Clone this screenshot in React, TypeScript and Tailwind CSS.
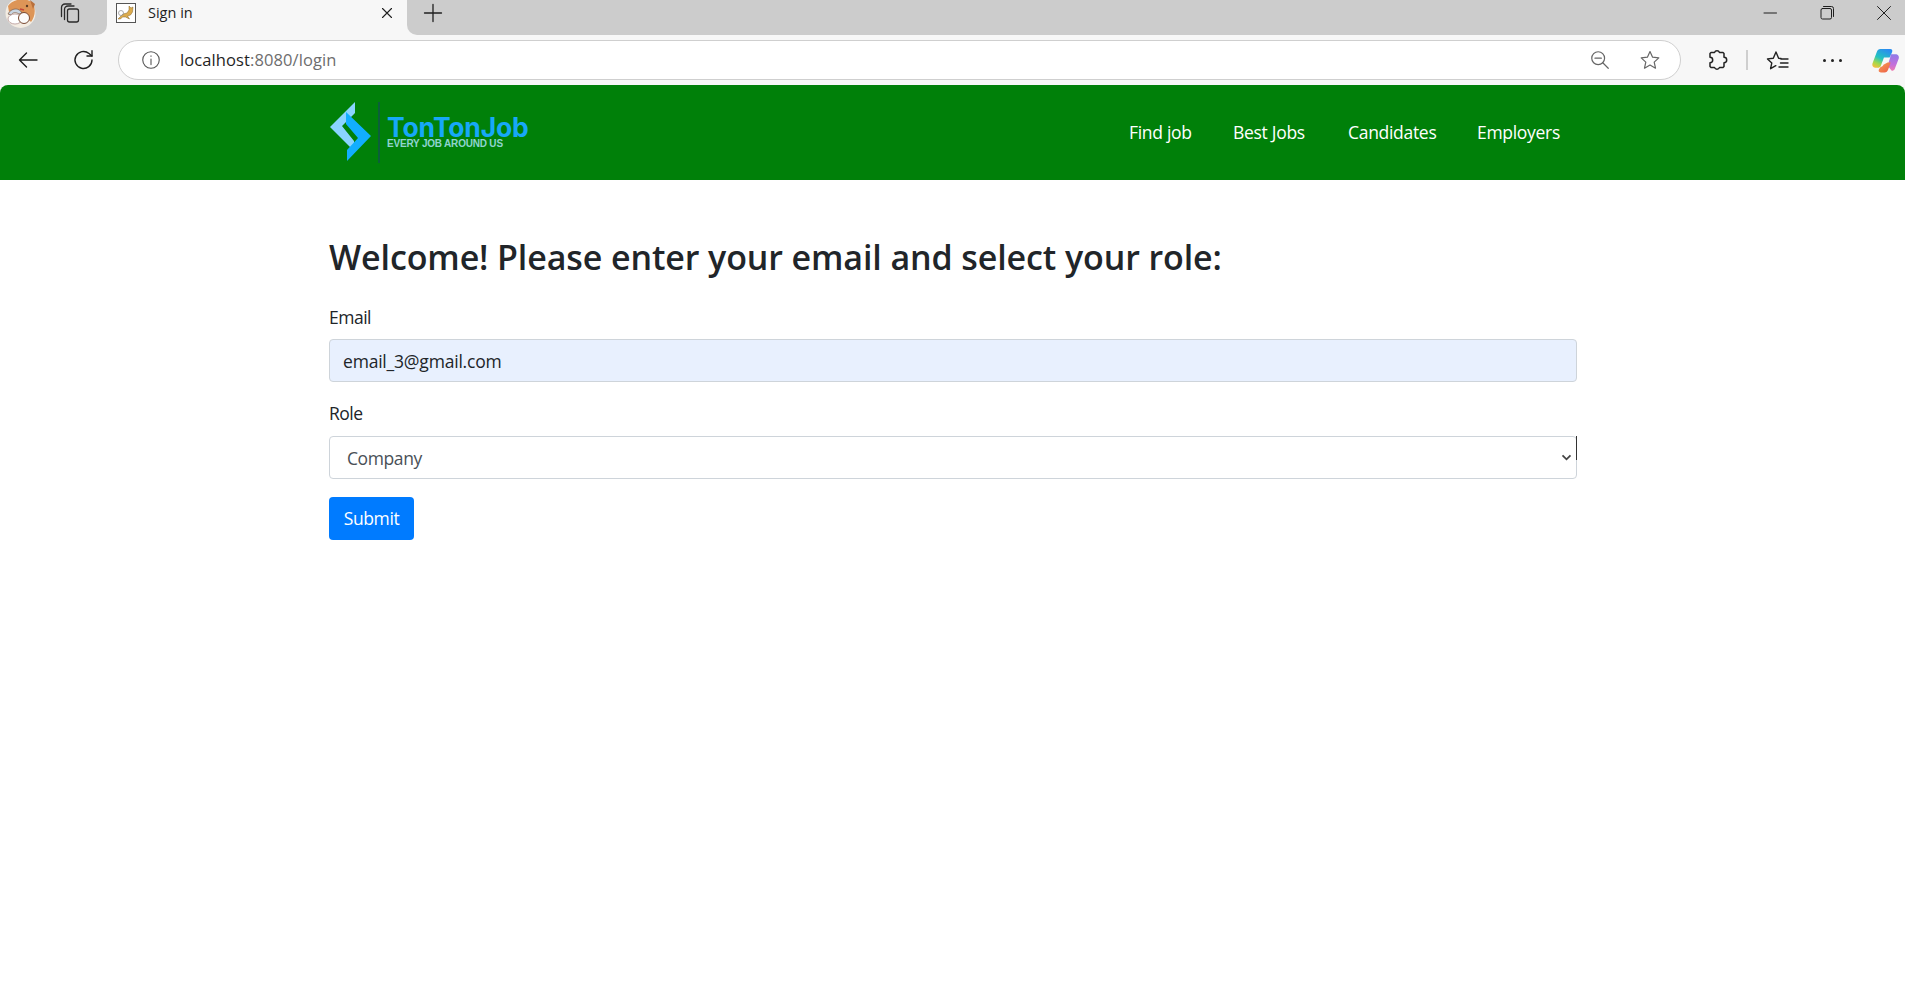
import React from "react";

const Stroke = ({ children, size = 24, vb = 24, w = 1.4, color = "#1f1f1f" }: { children: React.ReactNode; size?: number; vb?: number; w?: number; color?: string }) => (
  <svg width={size} height={size} viewBox={`0 0 ${vb} ${vb}`} fill="none" stroke={color} strokeWidth={w} strokeLinecap="round" strokeLinejoin="round">
    {children}
  </svg>
);

const Avatar = () => (
  <svg width="32" height="29" viewBox="0 0 32 29">
    <circle cx="15.500" cy="13" r="15" fill="#f3ece2" />
    <path d="M3 6C8-2 24-3 28 4c3 5 2 13-2 18l-6-6-8-7-8 3z" fill="#dd9557" />
    <path d="M25 0l5 4-2 5z" fill="#b9703c" />
    <path d="M3 14c3-6 11-7 14-1l-3 1c-3-2-6-2-8 1z" fill="#c9d6e2" stroke="#7a5a48" strokeWidth="0.7" />
    <ellipse cx="10" cy="19" rx="7" ry="5" fill="#fff" stroke="#a88" strokeWidth="0.7" />
    <circle cx="19" cy="18" r="5.500" fill="#fbfbfb" stroke="#7a4a32" strokeWidth="1" />
    <circle cx="22" cy="6" r="1.200" fill="#5a3a22" />
    <path d="M15 9l4 1" stroke="#c4453a" strokeWidth="1.400" />
  </svg>
);

const Favicon = () => (
  <svg width="20" height="20" viewBox="0 0 20 20">
    <rect x="0.500" y="0.500" width="19" height="19" fill="#fff" stroke="#555" />
    <path d="M2 16 7 11l4-1 2-3 0-4 2 2 2-1-.5 5-2 3-3 1 2 3-4-2-3 0-2 2z" fill="#dcab4c" stroke="#86662a" strokeWidth="0.500" />
    <circle cx="5" cy="10" r="2.500" fill="none" stroke="#999" strokeWidth="0.800" />
  </svg>
);

const Copilot = () => (
  <svg width="29" height="29" viewBox="0 0 28 28">
    <defs>
      <linearGradient id="cpa" x1="0.700" y1="0" x2="0.200" y2="1">
        <stop offset="0" stopColor="#2a8cf0" />
        <stop offset="0.5" stopColor="#22c3c0" />
        <stop offset="0.8" stopColor="#a6d84a" />
        <stop offset="1" stopColor="#f0c040" />
      </linearGradient>
      <linearGradient id="cpb" x1="0.500" y1="0" x2="0.500" y2="1">
        <stop offset="0" stopColor="#8f7be8" />
        <stop offset="0.6" stopColor="#c26fdc" />
        <stop offset="1" stopColor="#f07ab0" />
      </linearGradient>
      <linearGradient id="cpc" x1="0" y1="0" x2="1" y2="1">
        <stop offset="0" stopColor="#f8a050" />
        <stop offset="1" stopColor="#ec5a4a" />
      </linearGradient>
    </defs>
    <path d="M9 3h9.500c2 0 2.500 1.500 1.800 3L18 11h-5.500L9.500 19c-.6 1.400-1.500 2-3 2H4C1.800 21 .8 19 1.400 17L5.500 6C6.200 4 7.500 3 9 3z" fill="url(#cpa)" />
    <path d="M19 8h4.500c2.500 0 4 2 3.300 4L23 22c-.5 1.500-1.500 2-3 2l-4-5 2.500-8z" fill="url(#cpb)" />
    <path d="M16 16h3l-2.500 7c-.6 1.500-1.500 2.500-3.500 2.500H9.500C7.500 25.500 7 24 7.700 22.500L9.500 20c1 0 2-.5 2.500-2z" fill="url(#cpc)" />
  </svg>
);

const LogoMark = () => (
  <svg width="42" height="61" viewBox="0 -1 42 61">
    <path d="M26-1V10L13 23 25 38V48L1 24z" fill="#8ad4ff" />
    <path d="M17 9 42 33 18 58V47L29 35 17 21z" fill="#12aeff" />
  </svg>
);

export default function App() {
  return (
    <div className="min-h-[1002px] bg-white font-['Open_Sans',sans-serif] text-[#212529]">
      {/* Tab strip */}
      <div className="flex h-[35px] bg-[#f7f7f7]">
        <div className="flex w-[107px] items-start rounded-br-[10px] bg-[#cccccc]">
          <div className="w-[58px] pl-[5px]">
            <Avatar />
          </div>
          <div className="pt-[1px]">
            <Stroke size={24} w={1.3} color="#2a2a2a">
              <rect x="9.500" y="8" width="11" height="13" rx="2" />
              <path d="M6.500 18.500V8.500A3.500 3.500 0 0 1 10 5h6" />
              <path d="M3.500 15.500V6.500A3.500 3.500 0 0 1 7 3h6" />
            </Stroke>
          </div>
        </div>
        <div className="flex h-[26px] w-[300px] items-center pl-[9px] pr-[11px]">
          <Favicon />
          <span className="ml-[12px] flex-1 text-[14.500px] text-[#1f1f1f]">Sign in</span>
          <Stroke size={18} w={1.5}>
            <path d="M6 6l12 12M18 6 6 18" />
          </Stroke>
        </div>
        <div className="flex flex-1 items-start rounded-bl-[10px] bg-[#cccccc]">
          <div className="ml-[14px] pt-[1px]">
            <Stroke size={24} w={1.3}>
              <path d="M12 3.500v17M3.500 12h17" />
            </Stroke>
          </div>
          <div className="ml-auto flex items-center gap-[41px] pr-[13px] pt-[5px]">
            <Stroke size={16} vb={16} w={1}><path d="M2 8h12.500" /></Stroke>
            <Stroke size={16} vb={16} w={1}>
              <rect x="2" y="3.500" width="10.500" height="10.500" rx="1.500" />
              <path d="M4.500 1.500h8a2 2 0 0 1 2 2v8" />
            </Stroke>
            <Stroke size={16} vb={16} w={1}><path d="M1.500 1.500l13 13M14.500 1.500l-13 13" /></Stroke>
          </div>
        </div>
      </div>

      {/* Toolbar */}
      <div className="flex h-[50px] items-center bg-[#f7f7f7]">
        <div className="flex w-[56px] justify-center">
          <Stroke size={24} w={1.4}><path d="M21 12H3.500M10.500 5l-7 7 7 7" /></Stroke>
        </div>
        <div className="flex w-[55px] justify-center">
          <Stroke size={24} w={1.4}>
            <path d="M20 12a8.500 8.500 0 1 1-3-6.500L20 8" />
            <path d="M20 2.800V8h-5" />
          </Stroke>
        </div>
        <div className="ml-[7px] flex h-[40px] w-[1563px] items-center rounded-full border border-[#cfcfcf] bg-white pl-[21px] pr-[18px]">
          <Stroke size={22} w={1.2} color="#555">
            <circle cx="12" cy="12" r="9" />
            <path d="M12 11v6M12 7.500v.5" />
          </Stroke>
          <span className="ml-[18px] flex-1 text-[16.500px] tracking-[0.1px] text-[#1f1f1f]">
            localhost<span className="text-[#6d6d6d]">:8080/login</span>
          </span>
          <div className="flex items-center gap-[27px]">
            <Stroke size={22} w={1.3} color="#666">
              <circle cx="10" cy="10" r="7" />
              <path d="M6.500 10h7M15 15l6 6" />
            </Stroke>
            <Stroke size={24} w={1.2} color="#666">
              <path d="M12 3.500l2.600 5.700 6.200.7-4.600 4.200 1.300 6.100-5.500-3.100-5.500 3.100 1.300-6.100-4.600-4.200 6.200-.7z" />
            </Stroke>
          </div>
        </div>
        <div className="ml-[24px] flex items-center">
          <Stroke size={24} w={1.5} color="#222">
            <path d="M9.500 4.500a2.700 2.700 0 0 1 5 0h3.500l1 1v3.800a2.700 2.700 0 0 1 0 5.400v3.800l-1 1h-3.500a2.700 2.700 0 0 1-5 0H6l-1-1v-3.800a2.700 2.700 0 0 0 0-5.400V5.500l1-1z" />
          </Stroke>
          <div className="ml-[17px] h-[20px] w-[2px] bg-[#cfcfcf]" />
          <div className="ml-[18px]">
            <Stroke size={24} w={1.4} color="#222">
              <path d="M15 10.500l-2.400-.3L10 4 7.300 10.200l-5.800.7 4.300 4-1.200 5.800 5.200-3" />
              <path d="M15 11h7M14.500 15h7.500M13 19h9" />
            </Stroke>
          </div>
          <div className="ml-[33px] flex items-center gap-[5px]">
            <span className="h-[3px] w-[3px] rounded-full bg-[#222]" />
            <span className="h-[3px] w-[3px] rounded-full bg-[#222]" />
            <span className="h-[3px] w-[3px] rounded-full bg-[#222]" />
          </div>
          <div className="ml-[29px]">
            <Copilot />
          </div>
        </div>
      </div>

      {/* Site header */}
      <div className="bg-[#f7f7f7]">
        <header className="flex h-[95px] items-center rounded-t-[8px] bg-[#008009] pl-[329px]">
          <div className="flex w-[1231px] items-center justify-between">
            <div className="flex h-[61px] items-center">
              <LogoMark />
              <div className="ml-[7px] h-[61px] w-[2px] bg-[#0b5f3a]" />
              <div className="ml-[7px] flex flex-col">
                <span className="font-['Inter',sans-serif] text-[26.500px] leading-[20px] font-bold tracking-[-0.2px] text-[#17a8f8]">TonTonJob</span>
                <span className="mt-[2px] font-['Liberation_Sans',sans-serif] text-[10px] leading-[10px] font-bold tracking-[-0.2px] text-[#8fd4cf]">EVERY JOB AROUND US</span>
              </div>
            </div>
            <nav className="flex items-center text-[17.500px] tracking-[-0.3px] text-white">
              <a className="w-[104px]">Find job</a>
              <a className="w-[115px]">Best Jobs</a>
              <a className="w-[129px]">Candidates</a>
              <a className="w-[83px]">Employers</a>
            </nav>
          </div>
        </header>
      </div>

      {/* Form */}
      <main className="ml-[329px] w-[1248px] pt-[53px]">
        <h2 className="text-[34px] leading-[48px] font-semibold tracking-[-0.11px]">Welcome! Please enter your email and select your role:</h2>
        <label className="mt-[24px] block text-[17.500px] leading-[24px] tracking-[-0.5px]">Email</label>
        <input
          readOnly
          value="email_3@gmail.com"
          className="mt-[10px] block h-[43px] w-full rounded-[4px] border border-[#ced4da] bg-[#e8f0fe] px-[13px] text-[17.500px] tracking-[-0.2px] text-[#212529]"
        />
        <label className="mt-[19px] block text-[17.500px] leading-[24px] tracking-[-0.5px]">Role</label>
        <div className="relative mt-[11px]">
          <select className="block h-[43px] w-full appearance-none rounded-[4px] border border-[#ced4da] bg-white pl-[17px] pt-[1px] text-[17.500px] tracking-[-0.4px] text-[#495057]">
            <option>Company</option>
          </select>
          <svg className="absolute right-[5px] top-[18px]" width="11" height="8" viewBox="0 0 12 9" fill="none" stroke="#444" strokeWidth="2">
            <path d="M1.500 1.500 6 6l4.500-4.500" />
          </svg>
          <div className="absolute right-0 top-0 h-[24px] w-[1px] bg-[#333]" />
        </div>
        <button className="mt-[18px] h-[43px] w-[85px] rounded-[4px] bg-[#007bff] text-center text-[17.500px] tracking-[-0.4px] text-white">Submit</button>
      </main>
    </div>
  );
}
